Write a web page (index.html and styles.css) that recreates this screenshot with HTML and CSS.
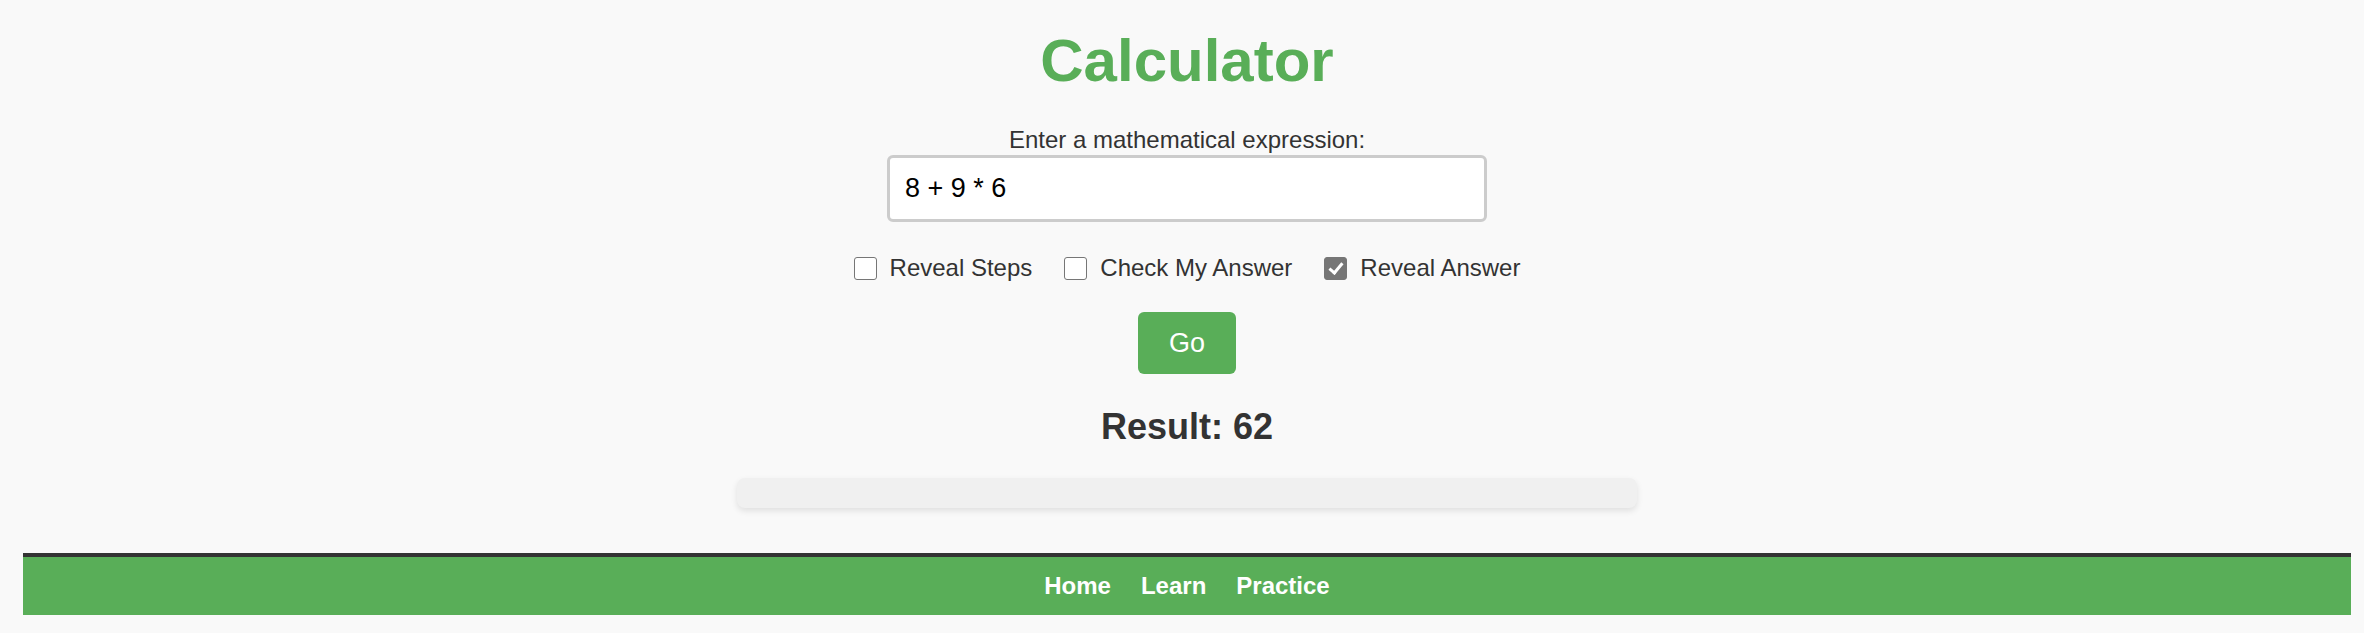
FILE: index.html
```html
<!DOCTYPE html>
<html lang="en">
<head>
<meta charset="utf-8">
<title>Calculator</title>
<link rel="stylesheet" href="styles.css">
</head>
<body>
<div class="page">
  <main class="calc">
    <h1 class="title">Calculator</h1>
    <label class="expr-label" for="expr">Enter a mathematical expression:</label>
    <input class="expr-input" id="expr" type="text" value="8 + 9 * 6">
    <div class="options">
      <label class="option"><input class="check" type="checkbox"><span>Reveal Steps</span></label>
      <label class="option"><input class="check" type="checkbox"><span>Check My Answer</span></label>
      <label class="option"><input class="check" type="checkbox" checked><span>Reveal Answer</span></label>
    </div>
    <button class="go" type="button">Go</button>
    <h2 class="result">Result: 62</h2>
    <div class="steps"></div>
  </main>
  <footer class="footer">
    <nav class="nav">
      <a class="nav-link" href="#">Home</a>
      <a class="nav-link" href="#">Learn</a>
      <a class="nav-link" href="#">Practice</a>
    </nav>
  </footer>
</div>
</body>
</html>
```
FILE: styles.css
```css
html, body {
  margin: 0;
  padding: 0;
  background: #f9f9f9;
}

body {
  font-family: "Liberation Sans", Arial, sans-serif;
  color: #333;
}

.page {
  padding: 0 13px 0 23px;
}

.calc {
  display: flex;
  flex-direction: column;
  align-items: center;
}

.title {
  margin: 26px 0 0;
  font-size: 60px;
  line-height: 70px;
  font-weight: bold;
  color: #59ae58;
}

.expr-label {
  display: block;
  margin-top: 30px;
  font-size: 24px;
  line-height: 28px;
  color: #333;
}

.expr-input {
  box-sizing: border-box;
  width: 600px;
  height: 67px;
  margin-top: 1px;
  padding: 0 15px;
  border: 3px solid #ccc;
  border-radius: 6px;
  background: #fff;
  font-family: "Liberation Sans", Arial, sans-serif;
  font-size: 27px;
  color: #000;
  outline: none;
}

.options {
  display: flex;
  align-items: center;
  justify-content: center;
  gap: 32px;
  margin-top: 32px;
  height: 28px;
}

.option {
  display: flex;
  align-items: center;
  gap: 13px;
  font-size: 24px;
  line-height: 28px;
  color: #333;
}

.check {
  appearance: none;
  -webkit-appearance: none;
  box-sizing: border-box;
  position: relative;
  width: 23px;
  height: 23px;
  margin: 0;
  border: 1.5px solid #767676;
  border-radius: 3px;
  background: #fff;
}

.check:checked {
  background: #767676;
  border-color: #767676;
}

.check:checked::after {
  content: "";
  position: absolute;
  left: 6.5px;
  top: 2px;
  width: 5px;
  height: 11px;
  border: solid #fff;
  border-width: 0 3px 3px 0;
  transform: rotate(40deg);
}

.go {
  box-sizing: border-box;
  width: 98px;
  height: 62px;
  margin-top: 30px;
  padding: 0;
  border: none;
  border-radius: 6px;
  background: #59ae58;
  color: #fff;
  font-family: "Liberation Sans", Arial, sans-serif;
  font-size: 27px;
}

.result {
  margin: 32px 0 0;
  font-size: 36px;
  line-height: 42px;
  font-weight: bold;
  color: #333;
}

.steps {
  width: 900px;
  height: 30px;
  margin-top: 30px;
  border-radius: 8px;
  background: #f0f0f0;
  box-shadow: 0 3px 6px rgba(0, 0, 0, 0.1);
}

.footer {
  margin-top: 45px;
  border-top: 4px solid #333;
  background: #59ae58;
  height: 58px;
  display: flex;
  align-items: center;
  justify-content: center;
}

.nav {
  display: flex;
  gap: 30px;
}

.nav-link {
  color: #fff;
  font-size: 24px;
  font-weight: bold;
  text-decoration: none;
}
```
